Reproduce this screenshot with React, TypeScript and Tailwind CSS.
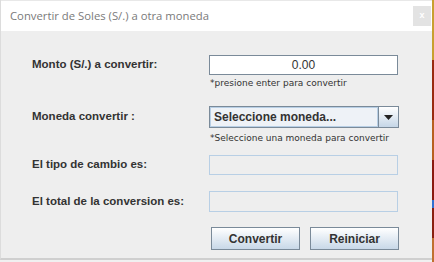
export default function App() {
  const label = "w-[177px] shrink-0 text-[11.5px] font-bold text-[#333333]";
  return (
    <div className="w-[434px] h-[262px] flex bg-[#f0f0f0] overflow-hidden" style={{ fontFamily: '"Liberation Sans", Arial, sans-serif' }}>
      <div className="w-[432px] h-[260px] flex flex-col border-l border-[#dcdcdc] border-b-2 border-b-[#cfcfcf] bg-[#eeeeee]">
        {/* Title bar */}
        <div className="h-[31px] shrink-0 bg-white flex items-center justify-between pl-[9px] pr-[1px] border-t border-[#e8e8e8]">
          <span className="text-[11.3px] text-[#7a7a7a]" style={{ fontFamily: '"Open Sans", sans-serif' }}>
            Convertir de Soles (S/.) a otra moneda
          </span>
          <div className="w-[18px] h-[20px] bg-[#e3e3e3] flex items-center justify-center text-[9px] text-white font-bold">x</div>
        </div>

        {/* Body */}
        <div className="flex flex-col pl-[31px]">
          <div className="flex items-center h-[20px] mt-[24px]">
            <span className={label}>Monto (S/.) a convertir:</span>
            <div className="w-[189px] h-[20px] bg-white border border-[#7a8a99] flex items-center justify-center text-[12px] text-[#333333]">0.00</div>
          </div>
          <div className="ml-[178px] mt-[2px] leading-[12px] text-[#333333]" style={{ fontFamily: '"DejaVu Sans", sans-serif', fontSize: '9px' }}>*presione enter para convertir</div>

          <div className="flex items-center h-[22px] mt-[17px]">
            <span className={label}>Moneda convertir :</span>
            <div className="w-[190px] h-[22px] flex border border-[#7a8a99]">
              <div className="flex-1 flex items-center pl-[3px] text-[12px] font-bold text-[#333333] bg-[#eef2f7] border border-[#b8cfe5]">Seleccione moneda...</div>
              <div className="w-[20px] flex items-center justify-center bg-gradient-to-b from-white to-[#c5d6e7] border-l border-[#7a8a99]">
                <svg width="9" height="5" viewBox="0 0 9 5"><polygon points="0,0 9,0 4.5,5" fill="#222" /></svg>
              </div>
            </div>
          </div>
          <div className="ml-[178px] mt-[4px] leading-[12px] text-[#333333]" style={{ fontFamily: '"DejaVu Sans", sans-serif', fontSize: '9px' }}>*Seleccione una moneda para convertir</div>

          <div className="flex items-center h-[20px] mt-[11px]">
            <span className={label}>El tipo de cambio es:</span>
            <div className="w-[189px] h-[20px] border border-[#b8cfe5]" />
          </div>

          <div className="flex items-center h-[21px] mt-[16px]">
            <span className={label}>El total de la conversion es:</span>
            <div className="w-[189px] h-[21px] border border-[#b8cfe5]" />
          </div>

          <div className="flex gap-[10px] ml-[179px] mt-[15px]">
            <button className="w-[89px] h-[23px] border border-[#7a8a99] bg-gradient-to-b from-white to-[#c8d8e8] text-[12px] font-bold text-[#333333]">Convertir</button>
            <button className="w-[89px] h-[23px] border border-[#7a8a99] bg-gradient-to-b from-white to-[#c8d8e8] text-[12px] font-bold text-[#333333]">Reiniciar</button>
          </div>
        </div>
      </div>
      <div className="w-[2px] h-full flex flex-col">
        <div className="h-[60px] bg-[#c8a030]" />
        <div className="h-[60px] bg-[#9a2a10]" />
        <div className="h-[40px] bg-[#b86020]" />
        <div className="h-[40px] bg-[#8a1a10]" />
        <div className="h-[8px] bg-[#3070d0]" />
        <div className="h-[30px] bg-[#8a2010]" />
        <div className="flex-1 bg-[#c07030]" />
      </div>
    </div>
  );
}
